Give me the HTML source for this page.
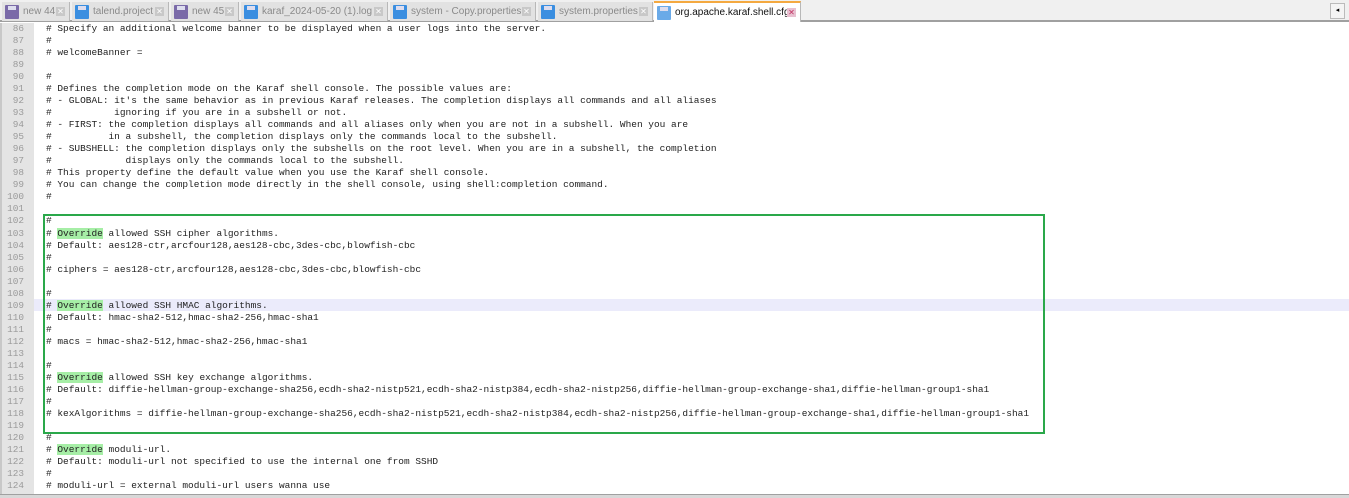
<!DOCTYPE html>
<html><head><style>
*{margin:0;padding:0;box-sizing:border-box}
body{width:1349px;height:498px;overflow:hidden;background:#fff;position:relative;font-family:"Liberation Sans",sans-serif}
#tabs{position:absolute;left:0;top:0;width:1349px;height:22px;background:#f0f0f0;border-bottom:2px solid #a0a0a0}
.tab{position:absolute;top:2px;height:19px;background:#e2e2e2;border-right:1px solid #b8b8b8;font-size:10px;color:#8a8a8a;line-height:19px;padding-left:21px;white-space:nowrap;overflow:hidden}
.tab .ic{position:absolute;left:3px;top:3px;width:14px;height:14px;border-radius:1px}
.tab .ic::after{content:"";position:absolute;left:3px;top:1px;width:8px;height:4px;background:#dde}
.tab .x{position:absolute;right:4px;top:5px;width:9px;height:9px;background:#c8c8c8;color:#fff;font-size:8px;line-height:9px;text-align:center}
.act{background:#fff;color:#111;border-top:2px solid #f4a940;top:1px;height:21px}
.act .x{background:#e8c0d0;color:#c03060}
#gut{position:absolute;left:0;top:23px;width:34px;height:472px;background:#e4e4e4;border-left:2px solid #c8c8c8}
#bot{position:absolute;left:0;top:494px;width:1349px;height:4px;background:#d8d8d8;border-top:1px solid #a0a0a0}
.ln{position:absolute;left:0;width:24px;text-align:right;font:9.4px "Liberation Mono",monospace;color:#9a9a9a;height:12px;line-height:12px}
.tx{position:absolute;left:46px;font:9.47px "Liberation Mono",monospace;color:#222;white-space:pre;height:12px;line-height:12px}
.hl{background:#a6eea6}
#cur{position:absolute;left:34px;top:299px;width:1315px;height:12px;background:#ebebfb}
#box{position:absolute;left:43px;top:214px;width:1002px;height:220px;border:2px solid #2aa84a}
</style></head><body>
<div id="tabs">
<div class="tab" style="left:2px;width:68px"><span class="ic" style="background:#7a6aa8"></span>new 44<span class="x">✕</span></div>
<div class="tab" style="left:72px;width:97px"><span class="ic" style="background:#3a8ee0"></span>talend.project<span class="x">✕</span></div>
<div class="tab" style="left:171px;width:68px"><span class="ic" style="background:#7a6aa8"></span>new 45<span class="x">✕</span></div>
<div class="tab" style="left:241px;width:147px"><span class="ic" style="background:#3a8ee0"></span>karaf_2024-05-20 (1).log<span class="x">✕</span></div>
<div class="tab" style="left:390px;width:146px"><span class="ic" style="background:#3a8ee0"></span>system - Copy.properties<span class="x">✕</span></div>
<div class="tab" style="left:538px;width:115px"><span class="ic" style="background:#3a8ee0"></span>system.properties<span class="x">✕</span></div>
<div class="tab act" style="left:654px;width:147px"><span class="ic" style="background:#6aaae8"></span>org.apache.karaf.shell.cfg<span class="x">✕</span></div>
<div style="position:absolute;left:1330px;top:3px;width:15px;height:16px;border:1px solid #bbb;background:#f4f4f4;font-size:7px;text-align:center;line-height:14px">◂</div>
</div>
<div id="gut"></div>
<div id="cur"></div>
<div id="bot"></div>
<div id="box"></div>
<div id="lines"></div>
<script>
var L=[
"# Specify an additional welcome banner to be displayed when a user logs into the server.",
"#",
"# welcomeBanner =",
"",
"#",
"# Defines the completion mode on the Karaf shell console. The possible values are:",
"# - GLOBAL: it's the same behavior as in previous Karaf releases. The completion displays all commands and all aliases",
"#           ignoring if you are in a subshell or not.",
"# - FIRST: the completion displays all commands and all aliases only when you are not in a subshell. When you are",
"#          in a subshell, the completion displays only the commands local to the subshell.",
"# - SUBSHELL: the completion displays only the subshells on the root level. When you are in a subshell, the completion",
"#             displays only the commands local to the subshell.",
"# This property define the default value when you use the Karaf shell console.",
"# You can change the completion mode directly in the shell console, using shell:completion command.",
"#",
"",
"#",
"# @Override@ allowed SSH cipher algorithms.",
"# Default: aes128-ctr,arcfour128,aes128-cbc,3des-cbc,blowfish-cbc",
"#",
"# ciphers = aes128-ctr,arcfour128,aes128-cbc,3des-cbc,blowfish-cbc",
"",
"#",
"# @Override@ allowed SSH HMAC algorithms.",
"# Default: hmac-sha2-512,hmac-sha2-256,hmac-sha1",
"#",
"# macs = hmac-sha2-512,hmac-sha2-256,hmac-sha1",
"",
"#",
"# @Override@ allowed SSH key exchange algorithms.",
"# Default: diffie-hellman-group-exchange-sha256,ecdh-sha2-nistp521,ecdh-sha2-nistp384,ecdh-sha2-nistp256,diffie-hellman-group-exchange-sha1,diffie-hellman-group1-sha1",
"#",
"# kexAlgorithms = diffie-hellman-group-exchange-sha256,ecdh-sha2-nistp521,ecdh-sha2-nistp384,ecdh-sha2-nistp256,diffie-hellman-group-exchange-sha1,diffie-hellman-group1-sha1",
"",
"#",
"# @Override@ moduli-url.",
"# Default: moduli-url not specified to use the internal one from SSHD",
"#",
"# moduli-url = external moduli-url users wanna use"];
var h="";
for(var i=0;i<L.length;i++){var y=23+i*12.03;
h+='<div class="ln" style="top:'+y+'px">'+(86+i)+'</div>';
var t=L[i].replace(/&/g,"&amp;").replace(/</g,"&lt;").replace(/@Override@/,'<span class="hl">Override</span>');
h+='<div class="tx" style="top:'+y+'px">'+t+'</div>';}
document.getElementById("lines").innerHTML=h;
</script>
</body></html>
